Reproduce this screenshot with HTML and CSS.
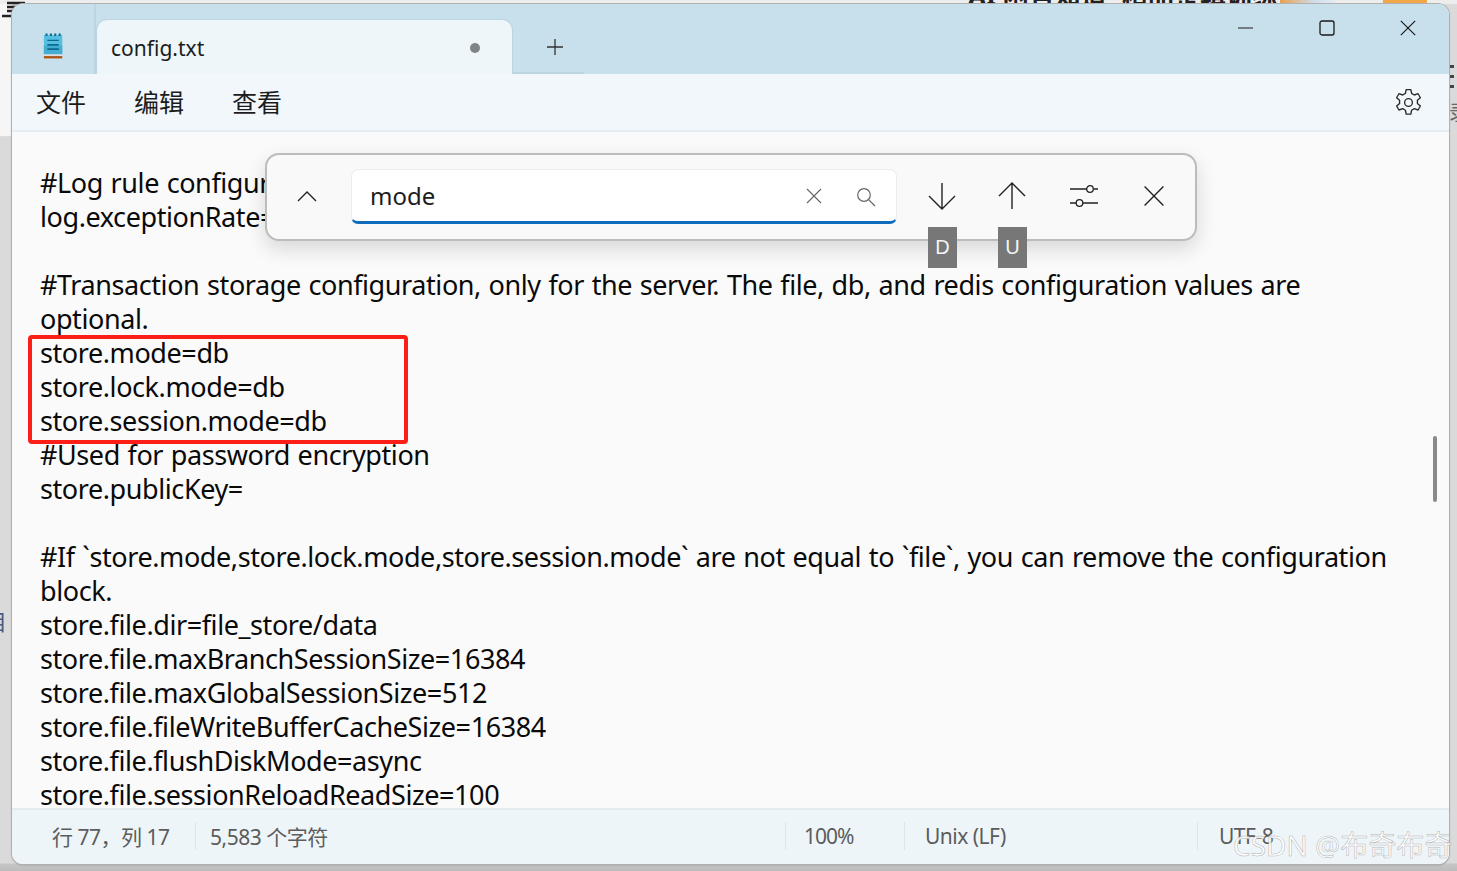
FILE: index.html
```html
<!DOCTYPE html>
<html lang="zh-CN">
<head>
<meta charset="utf-8">
<title>config.txt</title>
<link rel="stylesheet" href="styles.css">
</head>
<body>
<div class="desk-top-left"></div>
<div class="desk-top"></div>
<div class="desk-text dt-a">AI 闲官知道</div>
<div class="desk-text dt-b">精品整辑训练</div>
<div class="desk-deco dd-a"></div>
<div class="desk-deco dd-b"></div>
<div class="desk-text dt-c">目</div>
<div class="desk-text dt-d">录</div>
<div class="desk-dots"><i></i><i></i><i></i></div>
<svg class="desk-glyph" width="24" height="18" viewBox="0 0 24 18"><path d="M6 2H24M6 6H20M6 10H18M1 15H12" stroke="#222" stroke-width="2.4" fill="none"/></svg>

<main class="window">
  <header class="titlebar">
    <div class="app-icon">
      <svg width="24" height="30" viewBox="0 0 24 30">
        <rect x="1" y="2" width="21" height="22" fill="#55bfe0"/>
        <rect x="1" y="14" width="21" height="10" fill="#44aed2"/>
        <path d="M4 0v3M9 0v3M14 0v3M19 0v3" stroke="#0a6a8f" stroke-width="2.4"/>
        <path d="M5 8h13" stroke="#0a6a8f" stroke-width="1.4"/>
        <path d="M5 13h13M5 18h13" stroke="#0a6a8f" stroke-width="2"/>
        <rect x="1" y="24" width="21" height="1.4" fill="#e6e0d6"/>
        <rect x="1" y="26" width="21" height="2.6" fill="#a8530f"/>
      </svg>
    </div>
    <div class="tab">
      <span class="tab-name">config.txt</span>
      <span class="tab-dot"></span>
    </div>
    <div class="new-tab">
      <svg width="18" height="18" viewBox="0 0 18 18"><path d="M9 1v16M1 9h16" stroke="#333" stroke-width="1.3" fill="none"/></svg>
    </div>
    <div class="tab-tail"></div>
    <div class="win-controls">
      <button class="win-btn"><svg width="16" height="16" viewBox="0 0 16 16"><path d="M0 8h15" stroke="#1a1a1a" stroke-width="1.1"/></svg></button>
      <button class="win-btn"><svg width="16" height="16" viewBox="0 0 16 16"><rect x="1" y="1" width="14" height="14" rx="2" stroke="#1a1a1a" stroke-width="1.3" fill="none"/></svg></button>
      <button class="win-btn"><svg width="16" height="16" viewBox="0 0 16 16"><path d="M.8.8l14.4 14.4M15.2.8L.8 15.2" stroke="#1a1a1a" stroke-width="1.2" fill="none"/></svg></button>
    </div>
  </header>

  <nav class="menubar">
    <span class="menu-item">文件</span>
    <span class="menu-item">编辑</span>
    <span class="menu-item">查看</span>
    <svg class="gear" width="31" height="31" viewBox="0 0 24 24" fill="none" stroke="#2a2a2a" stroke-width="1.05" stroke-linejoin="round">
      <path d="M10.200 2h3.600l.6 3 2.100 1.200 2.900-1 1.800 3.100-2.300 2v2.400l2.300 2-1.800 3.100-2.900-1-2.100 1.200-.6 3h-3.600l-.6-3-2.100-1.200-2.900 1-1.800-3.100 2.300-2v-2.400l-2.300-2 1.800-3.100 2.900 1L9.600 5z"/>
      <circle cx="12" cy="12" r="3"/>
    </svg>
  </nav>

  <section class="editor">
    <div class="doc">
      <div class="ln">#Log rule configuration, only for the server.</div>
      <div class="ln">log.exceptionRate=100</div>
      <div class="ln">&nbsp;</div>
      <div class="ln">#Transaction storage configuration, only for the server. The file, db, and redis configuration values are</div>
      <div class="ln">optional.</div>
      <div class="ln">store.mode=db</div>
      <div class="ln">store.lock.mode=db</div>
      <div class="ln">store.session.mode=db</div>
      <div class="ln">#Used for password encryption</div>
      <div class="ln">store.publicKey=</div>
      <div class="ln">&nbsp;</div>
      <div class="ln">#If `store.mode,store.lock.mode,store.session.mode` are not equal to `file`, you can remove the configuration</div>
      <div class="ln">block.</div>
      <div class="ln">store.file.dir=file_store/data</div>
      <div class="ln">store.file.maxBranchSessionSize=16384</div>
      <div class="ln">store.file.maxGlobalSessionSize=512</div>
      <div class="ln">store.file.fileWriteBufferCacheSize=16384</div>
      <div class="ln">store.file.flushDiskMode=async</div>
      <div class="ln">store.file.sessionReloadReadSize=100</div>
    </div>
    <div class="red-box"></div>
    <div class="scroll-thumb"></div>

    <div class="find">
      <button class="find-btn expand">
        <svg width="20" height="12" viewBox="0 0 20 12"><path d="M1 11l9-9 9 9" stroke="#222" stroke-width="1.4" fill="none"/></svg>
      </button>
      <div class="find-input">
        <span class="find-text">mode</span>
        <svg class="find-clear" width="16" height="16" viewBox="0 0 16 16"><path d="M1 1l14 14M15 1L1 15" stroke="#666" stroke-width="1.1" fill="none"/></svg>
        <svg class="find-search" width="20" height="20" viewBox="0 0 20 20"><circle cx="8" cy="8" r="6.3" stroke="#666" stroke-width="1.2" fill="none"/><path d="M12.6 12.6L19 19" stroke="#666" stroke-width="1.2"/></svg>
      </div>
      <button class="find-btn down">
        <svg width="28" height="28" viewBox="0 0 28 28"><path d="M14 1v26M1 14l13 13 13-13" stroke="#222" stroke-width="1.4" fill="none"/></svg>
        <span class="key">D</span>
      </button>
      <button class="find-btn up">
        <svg width="28" height="28" viewBox="0 0 28 28"><path d="M14 27V1M1 14L14 1l13 13" stroke="#222" stroke-width="1.4" fill="none"/></svg>
        <span class="key">U</span>
      </button>
      <button class="find-btn sliders">
        <svg width="28" height="24" viewBox="0 0 28 24"><path d="M0 5h17M24 5h4M0 19h6M13 19h15" stroke="#222" stroke-width="1.4" fill="none"/><circle cx="20" cy="5" r="3.3" stroke="#222" stroke-width="1.3" fill="none"/><circle cx="9.500" cy="19" r="3.300" stroke="#222" stroke-width="1.3" fill="none"/></svg>
      </button>
      <button class="find-btn close">
        <svg width="20" height="20" viewBox="0 0 20 20"><path d="M.6.6l18.800 18.800M19.400.6L.6 19.400" stroke="#222" stroke-width="1.4" fill="none"/></svg>
      </button>
    </div>
  </section>

  <footer class="statusbar">
    <span class="st st-pos">行 77，列 17</span>
    <span class="st st-chars">5,583 个字符</span>
    <span class="st st-zoom">100%</span>
    <span class="st st-eol">Unix (LF)</span>
    <span class="st st-enc">UTF-8</span>
  </footer>
</main>
<div class="watermark">CSDN @布奇布奇</div>
</body>
</html>
```

FILE: styles.css
```css
* { box-sizing: border-box; }
html, body { margin: 0; height: 100%; }
body {
  position: relative;
  width: 1457px;
  height: 871px;
  overflow: hidden;
  padding: 4px 8px 7px 12px;
  background: linear-gradient(0deg, #bcbcbc 0, #c6c6c6 7px, #dadada 8px);
  font-family: "Noto Sans", "Noto Sans CJK SC", sans-serif;
}
.desk-top-left { position: absolute; left: 0; top: 0; width: 12px; height: 137px; background: #f6f6f6; border-bottom: 1px solid #ddd; }
.desk-top { position: absolute; left: 0; top: 0; width: 1457px; height: 4px; background: #ededed; }
.desk-glyph { position: absolute; left: 1px; top: 1px; }
.desk-text { position: absolute; font-size: 26px; line-height: 30px; color: #222; white-space: nowrap; }
.dt-a { left: 968px; top: -20px; font-weight: 700; }
.dt-b { left: 1122px; top: -20px; font-weight: 700; }
.dt-c { left: -15px; top: 606px; font-size: 22px; color: #4a5a80; }
.dt-d { left: 1449px; top: 98px; font-size: 20px; color: #666; }
.desk-deco { position: absolute; top: 0; height: 4px; }
.dd-a { left: 1280px; width: 60px; background: linear-gradient(90deg, #e8a050, #cfe0ee 60%, #eee); }
.dd-b { left: 1383px; width: 44px; background: #f0a848; }
.desk-dots { position: absolute; left: 1449px; top: 65px; display: flex; flex-direction: column; gap: 7px; }
.desk-dots i { display: block; width: 5px; height: 3px; background: #444; }

.window {
  position: relative;
  display: flex;
  flex-direction: column;
  width: 1437px;
  height: 860px;
  border-radius: 11px;
  overflow: hidden;
  background: #fafafa;
  box-shadow: 0 0 0 1px #b0b0b0, 0 1px 2px #888;
}

.titlebar {
  position: relative;
  display: flex;
  align-items: flex-end;
  height: 70px;
  flex: none;
  background: #c8dfec;
}
.app-icon { width: 84px; height: 70px; padding: 28px 0 0 31px; flex: none; box-shadow: inset -14px -2px 0 -12px #bdd5e3; }
.app-icon svg { display: block; width: 21px; height: 29px; }
.tab {
  display: flex;
  align-items: center;
  justify-content: space-between;
  width: 417px;
  height: 55px;
  padding: 1px 32px 0 14px;
  background: #eff6fa;
  border: 1px solid #bdd5e3;
  border-bottom: 0;
  border-radius: 11px 11px 0 0;
  flex: none;
}
.tab-name { font-size: 21px; color: #1c1c1c; }
.tab-dot { width: 10px; height: 10px; border-radius: 50%; background: #808487; }
.new-tab { width: 71px; height: 70px; flex: none; padding: 34px 0 0 33px; box-shadow: inset 0 -2px 0 #bdd5e3; }
.new-tab svg { display: block; }
.tab-tail { flex: 1; }
.win-controls { position: absolute; right: 0; top: 0; display: flex; padding-right: 1px; }
.win-btn { width: 81px; height: 50px; padding: 16px 0 0; border: 0; background: none; display: flex; justify-content: center; }

.menubar {
  display: flex;
  align-items: center;
  gap: 48px;
  height: 58px;
  flex: none;
  padding: 0 25px 2px 24px;
  background: #f1f7fb;
  border-bottom: 2px solid #e4edf1;
}
.menu-item { font-size: 25px; line-height: 30px; color: #1c1c1c; font-family: "Noto Sans CJK SC", sans-serif; font-weight: 400; }
.gear { margin: 3px 0 0 auto; }

.editor { position: relative; flex: 1; min-height: 0; overflow: hidden; background: #fafafa; }
.doc { padding: 34px 0 0 28px; }
.ln { font-size: 27px; line-height: 34px; height: 34px; color: #0a0a0a; white-space: pre; letter-spacing: -0.415px; word-spacing: 1.1px; }

.red-box {
  position: absolute;
  left: 16px; top: 203px;
  width: 380px; height: 109px;
  border: 4px solid #fb1f17;
  border-radius: 4px;
}
.scroll-thumb { position: absolute; right: 12px; top: 304px; width: 4px; height: 66px; border-radius: 2px; background: #8a8a8a; }

.find {
  position: absolute;
  left: 253px; top: 21px;
  width: 932px; height: 88px;
  display: flex;
  background: #f9f9f9;
  border: 2px solid #bcbcbc;
  border-radius: 14px;
  box-shadow: 0 8px 20px rgba(0,0,0,.14);
}
.find-btn { position: relative; padding: 0; border: 0; background: none; display: flex; align-items: center; justify-content: center; height: 81px; flex: none; }
.expand { width: 80px; padding-right: 0; margin-right: 4px; }
.find-input {
  position: relative;
  width: 546px; height: 55px;
  margin-top: 14px;
  display: flex; align-items: center;
  background: #fff;
  border: 1px solid #ececec;
  border-bottom: 3px solid #0f6cbd;
  border-radius: 7px;
  padding-left: 18px;
  flex: none;
}
.find-text { font-size: 24px; color: #1c1c1c; }
.find-clear { position: absolute; left: 454px; top: 18px; }
.find-search { position: absolute; left: 504px; top: 17px; }
.down, .up { width: 70px; }
.down { margin-left: 10px; }
.sliders { width: 74px; }
.close { width: 65px; }
.key {
  position: absolute; left: 21px; top: 72px;
  width: 29px; height: 41px;
  display: flex; align-items: center; justify-content: center;
  background: #777;
  color: #f4f4f4;
  font-size: 20px;
}

.statusbar {
  position: relative;
  height: 56px;
  flex: none;
  display: flex;
  align-items: center;
  padding-bottom: 2px;
  background: #eef5f9;
  border-top: 2px solid #e3ebef;
  font-size: 21px;
  color: #5c5c5c;
}
.st { display: flex; align-items: center; height: 28px; white-space: nowrap; flex: none; letter-spacing: -0.5px; }
.st + .st { border-left: 1px solid #dde5e9; }
.st-pos { width: 183px; padding-left: 40px; }
.st-chars { width: 590px; padding-left: 14px; }
.st-zoom { width: 119px; padding-left: 18px; letter-spacing: -1px; }
.st-eol { width: 293px; padding-left: 20px; }
.st-enc { padding-left: 21px; }

.watermark {
  position: absolute;
  left: 1233px; top: 825px;
  font-size: 28px;
  line-height: 40px;
  white-space: nowrap;
  color: rgba(255,255,255,.85);
  -webkit-text-stroke: .5px rgba(150,150,150,.75);
}
```
